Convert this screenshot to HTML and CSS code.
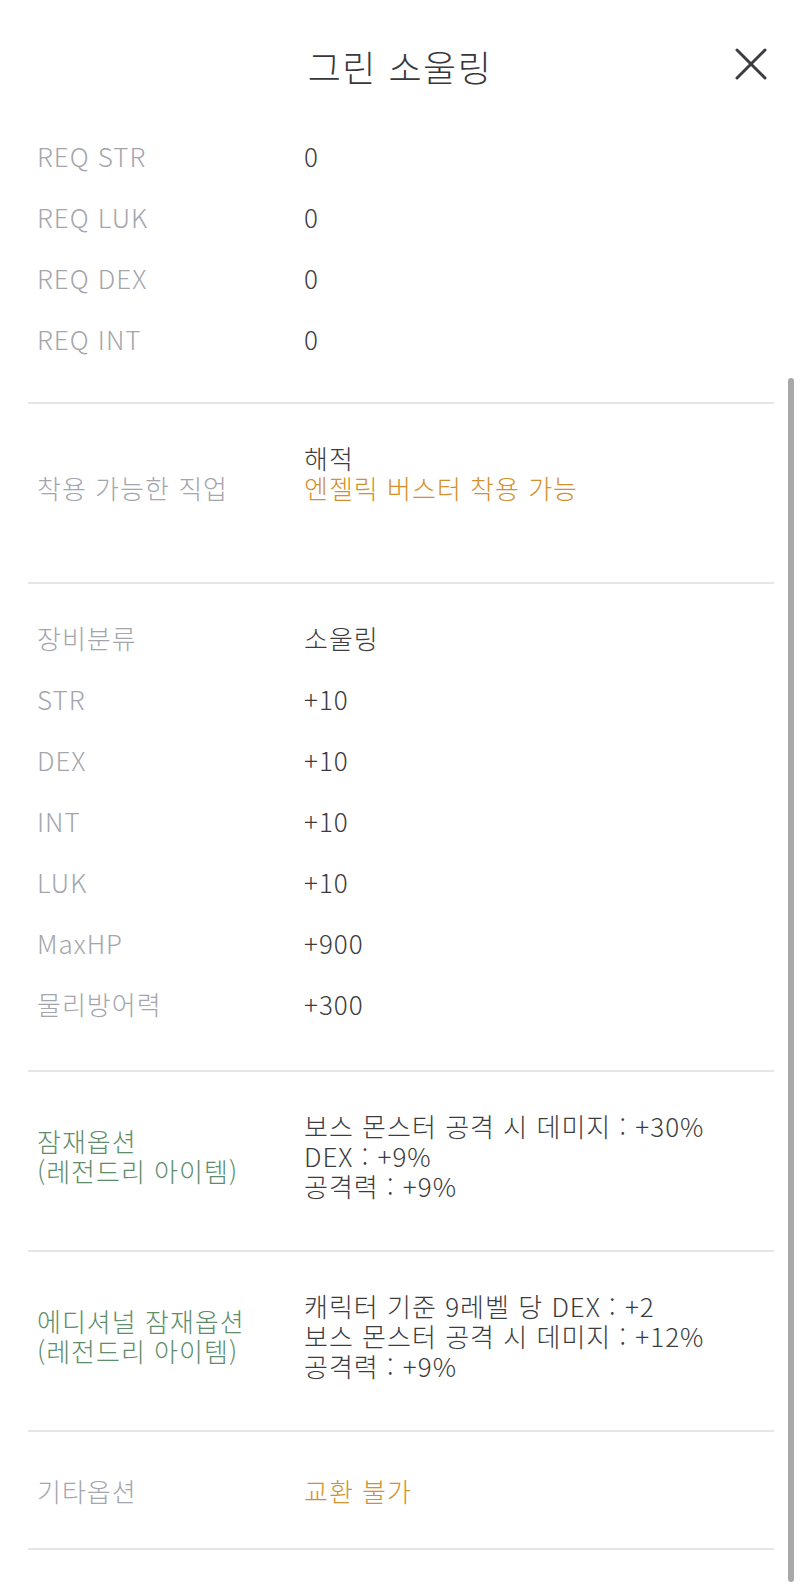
FILE: index.html
```html
<!DOCTYPE html>
<html lang="ko">
<head>
  <meta charset="UTF-8">
  <meta name="viewport" content="width=device-width, initial-scale=1.0">
  <title>그린 소울링</title>
  <link rel="stylesheet" href="styles.css">
</head>
<body>
  <div class="sheet">
    <div class="sheet-header">
      <h1>그린 소울링</h1>
      <button class="close-btn" aria-label="닫기">
        <svg width="34" height="34" viewBox="0 0 34 34">
          <path d="M3 3 L31 31 M31 3 L3 31" stroke="#3b3b40" stroke-width="3" stroke-linecap="round" fill="none"/>
        </svg>
      </button>
    </div>

    <!-- 요구 스탯 -->
    <div class="section">
      <div class="row"><div class="label">REQ STR</div><div class="value">0</div></div>
      <div class="row"><div class="label">REQ LUK</div><div class="value">0</div></div>
      <div class="row"><div class="label">REQ DEX</div><div class="value">0</div></div>
      <div class="row"><div class="label">REQ INT</div><div class="value">0</div></div>
    </div>

    <!-- 착용 직업 -->
    <div class="section">
      <div class="row multi">
        <div class="label">착용 가능한 직업</div>
        <div class="value">
          <div>해적</div>
          <div class="orange">엔젤릭 버스터 착용 가능</div>
          <div>&nbsp;</div>
        </div>
      </div>
    </div>

    <!-- 기본 옵션 -->
    <div class="section section-stats">
      <div class="row"><div class="label">장비분류</div><div class="value">소울링</div></div>
      <div class="row"><div class="label">STR</div><div class="value">+10</div></div>
      <div class="row"><div class="label">DEX</div><div class="value">+10</div></div>
      <div class="row"><div class="label">INT</div><div class="value">+10</div></div>
      <div class="row"><div class="label">LUK</div><div class="value">+10</div></div>
      <div class="row"><div class="label">MaxHP</div><div class="value">+900</div></div>
      <div class="row"><div class="label">물리방어력</div><div class="value">+300</div></div>
    </div>

    <!-- 잠재옵션 -->
    <div class="section">
      <div class="row multi">
        <div class="label green">잠재옵션<br>(레전드리 아이템)</div>
        <div class="value">
          <div>보스 몬스터 공격 시 데미지 : +30%</div>
          <div>DEX : +9%</div>
          <div>공격력 : +9%</div>
        </div>
      </div>
    </div>

    <!-- 에디셔널 잠재옵션 -->
    <div class="section">
      <div class="row multi">
        <div class="label green">에디셔널 잠재옵션<br>(레전드리 아이템)</div>
        <div class="value">
          <div>캐릭터 기준 9레벨 당 DEX : +2</div>
          <div>보스 몬스터 공격 시 데미지 : +12%</div>
          <div>공격력 : +9%</div>
        </div>
      </div>
    </div>

    <!-- 기타 -->
    <div class="section section-last">
      <div class="row"><div class="label">기타옵션</div><div class="value orange">교환 불가</div></div>
    </div>
  </div>

  <div class="scrollbar"></div>
</body>
</html>
```

FILE: styles.css
```css
body {
  margin: 0;
  background-color: #fff;
  font-family: "Noto Sans CJK KR", "Noto Sans", sans-serif;
  font-weight: 300;
  color: #3c3c3e;
}
.sheet {
  width: 746px;
  margin-left: 28px;
}
.sheet-header {
  height: 102px;
  display: flex;
  align-items: center;
  justify-content: center;
  position: relative;
}
.sheet-header h1 {
  margin: 0;
  font-size: 36px;
  font-weight: 300;
  letter-spacing: 1.5px;
  color: #38383c;
  padding-top: 30px;
  margin-left: -2px;
}
.close-btn {
  position: absolute;
  right: 6px;
  top: 47px;
  border: none;
  background: none;
  padding: 0;
  width: 34px;
  height: 34px;
}
.section {
  padding: 23px 9px 33px;
  border-bottom: 2px solid #e6e6e8;
}
.section-stats {
  padding-bottom: 36px;
}
.section-last {
  padding: 28px 9px 27px;
}
.row {
  display: flex;
  align-items: center;
  min-height: 61px;
  font-size: 26px;
  letter-spacing: 1px;
}
.row.multi {
  padding: 16px 0;
  line-height: 30px;
}
.label {
  width: 267px;
  flex-shrink: 0;
  color: #a4a5ad;
}
.value {
  color: #3c3c3e;
}
.orange {
  color: #d3912c;
}
.label.green {
  color: #5d8d69;
}
.scrollbar {
  position: absolute;
  left: 788px;
  top: 378px;
  width: 6px;
  height: 1204px;
  border-radius: 3px;
  background-color: #a9a9a9;
}
```
